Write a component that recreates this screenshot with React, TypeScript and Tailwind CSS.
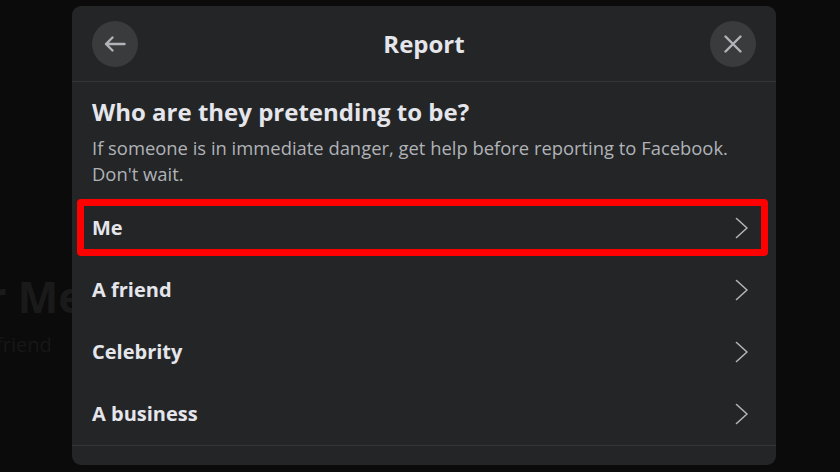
const options = ["Me", "A friend", "Celebrity", "A business"];

function Chevron() {
  return (
    <svg width="16" height="22" viewBox="0 0 16 22" fill="none" className="text-[#b0b3b8]">
      <path d="M2.5 1.5 L13 11 L2.5 20.5" stroke="currentColor" strokeWidth="1.6" strokeLinecap="round" strokeLinejoin="round" />
    </svg>
  );
}

export default function App() {
  return (
    <div
      className="relative h-[472px] w-[840px] overflow-hidden bg-[#0b0b0b]"
      style={{ fontFamily: '"Open Sans", "Noto Sans", sans-serif' }}
    >
      {/* page behind the dialog */}
      <div className="pt-[267px]">
        <div className="ml-[-13px] text-[43px] font-bold leading-[60px] text-[#1a1a1a]">r Me</div>
        <div className="ml-[-4px] mt-[4px] text-[20px] leading-[28px] text-[#171717]">friend</div>
      </div>

      {/* dialog */}
      <div className="absolute left-[72px] top-[6px] flex h-[459px] w-[704px] flex-col rounded-[9px] bg-[#242526] text-[#e4e6eb]">
        <div className="flex h-[76px] items-center justify-between border-b border-[#343536] px-[20px]">
          <button className="flex h-[46px] w-[46px] items-center justify-center rounded-full bg-[#3a3b3c]">
            <svg width="22" height="16" viewBox="0 0 22 16" fill="none" className="text-[#b0b3b8]">
              <path d="M20.5 8 H2 M8.5 1.5 L2 8 L8.5 14.5" stroke="currentColor" strokeWidth="2.4" strokeLinecap="round" strokeLinejoin="round" />
            </svg>
          </button>
          <h1 className="text-[24px] font-bold">Report</h1>
          <button className="flex h-[46px] w-[46px] items-center justify-center rounded-full bg-[#3a3b3c]">
            <svg width="18" height="18" viewBox="0 0 18 18" fill="none" className="text-[#b0b3b8]">
              <path d="M1.5 1.5 L16.5 16.5 M16.5 1.5 L1.5 16.5" stroke="currentColor" strokeWidth="2.4" strokeLinecap="round" />
            </svg>
          </button>
        </div>

        <div className="px-[20px] pt-[15px] pb-[10px]">
          <h2 className="text-[24px] font-bold leading-[30px]">Who are they pretending to be?</h2>
          <p className="mt-[8px] text-[18.4px] leading-[26px] text-[#b0b3b8]">
            If someone is in immediate danger, get help before reporting to Facebook. Don't wait.
          </p>
        </div>

        <ul className="border-b border-[#343536]">
          {options.map((o, i) => (
            <li key={o} className="relative flex h-[62px] items-center justify-between pl-[20px] pr-[26px]">
              <span className="text-[20px] font-bold">{o}</span>
              <Chevron />
              {i === 0 ? (
                <div className="pointer-events-none absolute bottom-[3px] left-[5px] right-[8px] top-[2px] rounded-[4px] border-[7px] border-[#ff0000]" />
              ) : null}
            </li>
          ))}
        </ul>
      </div>
    </div>
  );
}
